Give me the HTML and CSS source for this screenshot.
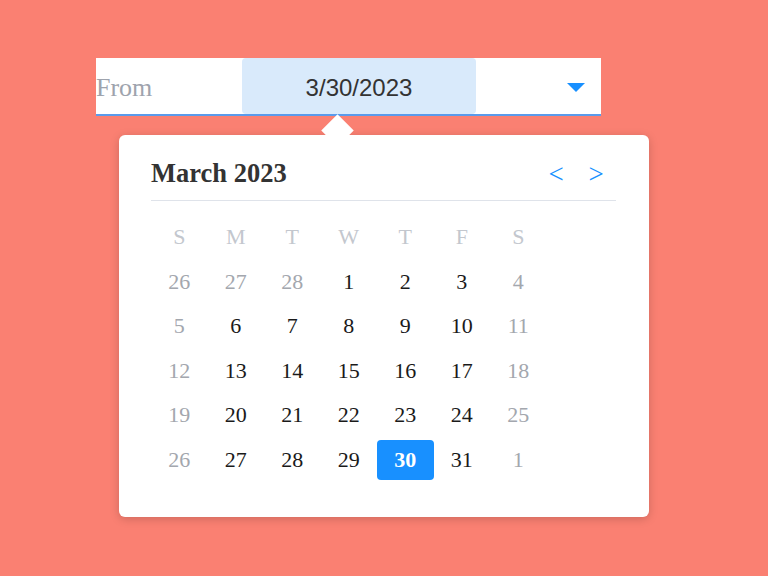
FILE: index.html
```html
<!DOCTYPE html>
<html lang="en">
<head>
<meta charset="utf-8">
<title>Date picker</title>
<link rel="stylesheet" href="styles.css">
</head>
<body>
  <div class="picker">
    <div class="field">
      <span class="field-label">From</span>
      <span class="field-value">3/30/2023</span>
      <span class="field-caret"></span>
    </div>

    <div class="popup">
      <span class="popup-arrow"></span>
      <div class="popup-head">
        <span class="month">March 2023</span>
        <div class="nav">
          <button class="nav-btn" type="button">&lt;</button>
          <button class="nav-btn" type="button">&gt;</button>
        </div>
      </div>

      <div class="days">
        <span class="wd">S</span><span class="wd">M</span><span class="wd">T</span><span class="wd">W</span><span class="wd">T</span><span class="wd">F</span><span class="wd">S</span>

        <span class="d off">26</span><span class="d off">27</span><span class="d off">28</span><span class="d">1</span><span class="d">2</span><span class="d">3</span><span class="d off">4</span>
        <span class="d off">5</span><span class="d">6</span><span class="d">7</span><span class="d">8</span><span class="d">9</span><span class="d">10</span><span class="d off">11</span>
        <span class="d off">12</span><span class="d">13</span><span class="d">14</span><span class="d">15</span><span class="d">16</span><span class="d">17</span><span class="d off">18</span>
        <span class="d off">19</span><span class="d">20</span><span class="d">21</span><span class="d">22</span><span class="d">23</span><span class="d">24</span><span class="d off">25</span>
        <span class="d off">26</span><span class="d">27</span><span class="d">28</span><span class="d">29</span><span class="d sel">30</span><span class="d">31</span><span class="d off">1</span>
      </div>
    </div>
  </div>
</body>
</html>
```

FILE: styles.css
```css
html, body {
  margin: 0;
  padding: 0;
}

body {
  width: 768px;
  height: 576px;
  background: #fa8072;
  font-family: "Liberation Serif", "Times New Roman", serif;
  overflow: hidden;
}

.picker {
  padding: 58px 0 0 96px;
  width: 505px;
}

/* input row */
.field {
  display: flex;
  align-items: center;
  height: 56px;
  background: #fff;
  border-bottom: 2px solid #5a9bec;
}

.field-label {
  width: 146px;
  font-size: 26px;
  color: #9ea3ad;
  padding-top: 3px;
}

.field-value {
  align-self: stretch;
  width: 234px;
  display: flex;
  align-items: center;
  justify-content: center;
  padding-top: 3px;
  box-sizing: border-box;
  background: #d9eafb;
  border-radius: 4px;
  font-family: "Liberation Sans", Arial, sans-serif;
  font-size: 24px;
  color: #333;
}

.field-caret {
  margin-left: auto;
  margin-right: 16px;
  margin-top: 2px;
  width: 0;
  height: 0;
  border-left: 9.5px solid transparent;
  border-right: 9.5px solid transparent;
  border-top: 9px solid #1890ff;
}

/* calendar popup */
.popup {
  position: relative;
  margin: 19px 0 0 23px;
  width: 530px;
  height: 382px;
  box-sizing: border-box;
  padding: 18px 33px 0 32px;
  background: #fff;
  border-radius: 6px;
  box-shadow: 0 2px 10px rgba(0, 0, 0, 0.18);
}

.popup-arrow {
  position: absolute;
  top: -16px;
  left: 207px;
  width: 23px;
  height: 23px;
  background: #fff;
  transform: rotate(45deg);
}

.popup-head {
  position: relative;
  display: flex;
  align-items: center;
  height: 40px;
  padding-bottom: 7px;
  border-bottom: 1px solid #dfe3ea;
}

.month {
  font-size: 26.5px;
  font-weight: bold;
  color: #333;
  line-height: 40px;
}

.nav {
  margin-left: auto;
  display: flex;
}

.nav-btn {
  width: 40px;
  padding: 1px 0 0;
  border: 0;
  background: none;
  font-family: "Liberation Serif", "Times New Roman", serif;
  font-size: 27px;
  line-height: 40px;
  color: #1890ff;
}

.days {
  display: grid;
  grid-template-columns: repeat(7, 56.5px);
  grid-auto-rows: 40px;
  row-gap: 4.5px;
  margin-top: 16px;
}

.wd,
.d {
  display: flex;
  align-items: center;
  justify-content: center;
  font-size: 22px;
}

.wd {
  color: #c3c7ce;
}

.d {
  color: #1a1a1a;
}

.d.off {
  color: #a3a7ae;
}

.d.sel {
  background: #1890ff;
  color: #fff;
  font-weight: bold;
  border-radius: 4px;
}
```
